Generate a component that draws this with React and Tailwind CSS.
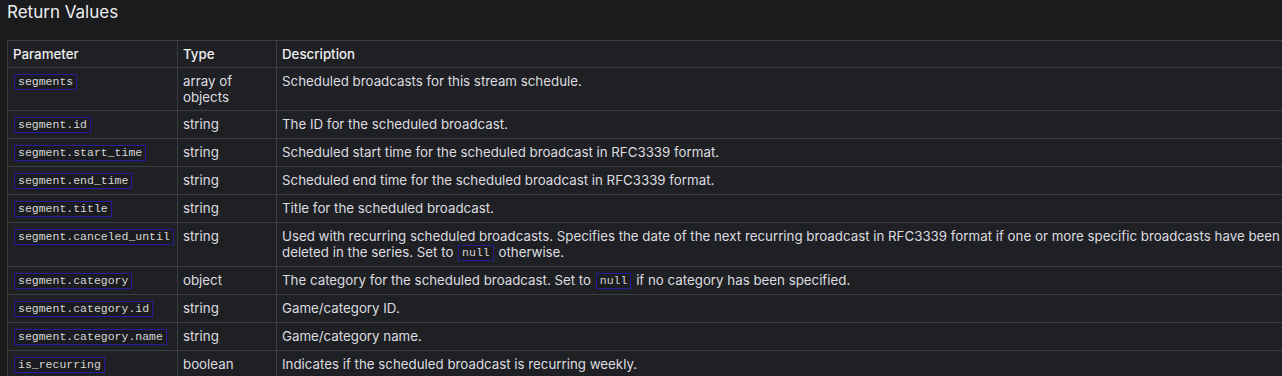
import React from "react";

const C = ({ children }) => (
  <code className="mx-[1px] inline-block border border-[#2a1a9e] bg-[#1b1c1f] px-[3px] text-[11.5px] leading-[14px] text-[#d6d6d6] [font-family:'Liberation_Mono','Courier_New',monospace] align-[1px]">
    {children}
  </code>
);

const rows = [
  ["segments", "array of objects", <>Scheduled broadcasts for this stream schedule.</>],
  ["segment.id", "string", <>The ID for the scheduled broadcast.</>],
  ["segment.start_time", "string", <>Scheduled start time for the scheduled broadcast in RFC3339 format.</>],
  ["segment.end_time", "string", <>Scheduled end time for the scheduled broadcast in RFC3339 format.</>],
  ["segment.title", "string", <>Title for the scheduled broadcast.</>],
  [
    "segment.canceled_until",
    "string",
    <>
      Used with recurring scheduled broadcasts. Specifies the date of the next recurring broadcast in RFC3339 format if one or more specific broadcasts have been deleted in the series. Set to <C>null</C> otherwise.
    </>,
  ],
  ["segment.category", "object", <>The category for the scheduled broadcast. Set to <C>null</C> if no category has been specified.</>],
  ["segment.category.id", "string", <>Game/category ID.</>],
  ["segment.category.name", "string", <>Game/category name.</>],
  ["is_recurring", "boolean", <>Indicates if the scheduled broadcast is recurring weekly.</>],
];

export default function App() {
  return (
    <div className="h-[376px] w-full overflow-hidden bg-[#1a1b1d] pl-[7px] text-[#dcdce0] [font-family:Inter,'Noto_Sans',sans-serif]">
      <h2 className="text-[17px] leading-[24px] font-normal text-[#efeff1]">Return Values</h2>
      <table className="mt-[16px] w-[1292px] table-fixed border-collapse bg-[#1f2023] text-[13.3px] leading-[16px]">
        <colgroup>
          <col className="w-[170px]" />
          <col className="w-[99px]" />
          <col />
        </colgroup>
        <thead>
          <tr>
            <th className="border border-[#3b3e41] px-[5px] py-[5px] text-left font-medium text-[#efeff1]">Parameter</th>
            <th className="border border-[#3b3e41] px-[5px] py-[5px] text-left font-medium text-[#efeff1]">Type</th>
            <th className="border border-[#3b3e41] px-[5px] py-[5px] text-left font-medium text-[#efeff1]">Description</th>
          </tr>
        </thead>
        <tbody>
          {rows.map(([p, t, d]) => (
            <tr key={p}>
              <td className="border border-[#3b3e41] px-[5px] py-[5px] align-top">
                <C>{p}</C>
              </td>
              <td className="border border-[#3b3e41] px-[5px] py-[5px] align-top">{t}</td>
              <td className="border border-[#3b3e41] px-[5px] py-[5px] align-top">{d}</td>
            </tr>
          ))}
        </tbody>
      </table>
    </div>
  );
}
